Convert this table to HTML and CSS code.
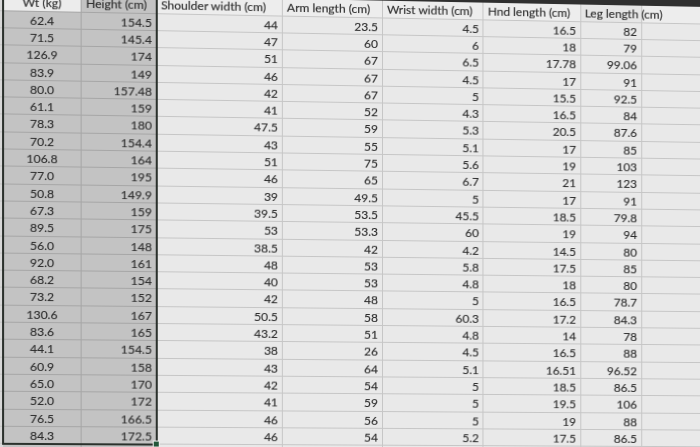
FILE: index.html
```html
<!DOCTYPE html>
<html lang="en">
<head>
<meta charset="utf-8">
<title>Body measurements</title>
<link rel="stylesheet" href="styles.css">
</head>
<body>
<div class="photo">
<div class="sheet">
  <div class="topbar"></div>
  <div class="row hd"><div class="c"></div><div class="c">Wt (kg)</div><div class="c">Height (cm)</div><div class="c">Shoulder width (cm)</div><div class="c">Arm length (cm)</div><div class="c">Wrist width (cm)</div><div class="c">Hnd length (cm)</div><div class="c">Leg length (cm)</div><div class="c"></div></div>
  <div class="row"><div class="c"></div><div class="c">62.4</div><div class="c">154.5</div><div class="c">44</div><div class="c">23.5</div><div class="c">4.5</div><div class="c">16.5</div><div class="c">82</div><div class="c"></div></div>
  <div class="row"><div class="c"></div><div class="c">71.5</div><div class="c">145.4</div><div class="c">47</div><div class="c">60</div><div class="c">6</div><div class="c">18</div><div class="c">79</div><div class="c"></div></div>
  <div class="row"><div class="c"></div><div class="c">126.9</div><div class="c">174</div><div class="c">51</div><div class="c">67</div><div class="c">6.5</div><div class="c">17.78</div><div class="c">99.06</div><div class="c"></div></div>
  <div class="row"><div class="c"></div><div class="c">83.9</div><div class="c">149</div><div class="c">46</div><div class="c">67</div><div class="c">4.5</div><div class="c">17</div><div class="c">91</div><div class="c"></div></div>
  <div class="row"><div class="c"></div><div class="c">80.0</div><div class="c">157.48</div><div class="c">42</div><div class="c">67</div><div class="c">5</div><div class="c">15.5</div><div class="c">92.5</div><div class="c"></div></div>
  <div class="row"><div class="c"></div><div class="c">61.1</div><div class="c">159</div><div class="c">41</div><div class="c">52</div><div class="c">4.3</div><div class="c">16.5</div><div class="c">84</div><div class="c"></div></div>
  <div class="row"><div class="c"></div><div class="c">78.3</div><div class="c">180</div><div class="c">47.5</div><div class="c">59</div><div class="c">5.3</div><div class="c">20.5</div><div class="c">87.6</div><div class="c"></div></div>
  <div class="row"><div class="c"></div><div class="c">70.2</div><div class="c">154.4</div><div class="c">43</div><div class="c">55</div><div class="c">5.1</div><div class="c">17</div><div class="c">85</div><div class="c"></div></div>
  <div class="row"><div class="c"></div><div class="c">106.8</div><div class="c">164</div><div class="c">51</div><div class="c">75</div><div class="c">5.6</div><div class="c">19</div><div class="c">103</div><div class="c"></div></div>
  <div class="row"><div class="c"></div><div class="c">77.0</div><div class="c">195</div><div class="c">46</div><div class="c">65</div><div class="c">6.7</div><div class="c">21</div><div class="c">123</div><div class="c"></div></div>
  <div class="row"><div class="c"></div><div class="c">50.8</div><div class="c">149.9</div><div class="c">39</div><div class="c">49.5</div><div class="c">5</div><div class="c">17</div><div class="c">91</div><div class="c"></div></div>
  <div class="row"><div class="c"></div><div class="c">67.3</div><div class="c">159</div><div class="c">39.5</div><div class="c">53.5</div><div class="c">45.5</div><div class="c">18.5</div><div class="c">79.8</div><div class="c"></div></div>
  <div class="row"><div class="c"></div><div class="c">89.5</div><div class="c">175</div><div class="c">53</div><div class="c">53.3</div><div class="c">60</div><div class="c">19</div><div class="c">94</div><div class="c"></div></div>
  <div class="row"><div class="c"></div><div class="c">56.0</div><div class="c">148</div><div class="c">38.5</div><div class="c">42</div><div class="c">4.2</div><div class="c">14.5</div><div class="c">80</div><div class="c"></div></div>
  <div class="row"><div class="c"></div><div class="c">92.0</div><div class="c">161</div><div class="c">48</div><div class="c">53</div><div class="c">5.8</div><div class="c">17.5</div><div class="c">85</div><div class="c"></div></div>
  <div class="row"><div class="c"></div><div class="c">68.2</div><div class="c">154</div><div class="c">40</div><div class="c">53</div><div class="c">4.8</div><div class="c">18</div><div class="c">80</div><div class="c"></div></div>
  <div class="row"><div class="c"></div><div class="c">73.2</div><div class="c">152</div><div class="c">42</div><div class="c">48</div><div class="c">5</div><div class="c">16.5</div><div class="c">78.7</div><div class="c"></div></div>
  <div class="row"><div class="c"></div><div class="c">130.6</div><div class="c">167</div><div class="c">50.5</div><div class="c">58</div><div class="c">60.3</div><div class="c">17.2</div><div class="c">84.3</div><div class="c"></div></div>
  <div class="row"><div class="c"></div><div class="c">83.6</div><div class="c">165</div><div class="c">43.2</div><div class="c">51</div><div class="c">4.8</div><div class="c">14</div><div class="c">78</div><div class="c"></div></div>
  <div class="row"><div class="c"></div><div class="c">44.1</div><div class="c">154.5</div><div class="c">38</div><div class="c">26</div><div class="c">4.5</div><div class="c">16.5</div><div class="c">88</div><div class="c"></div></div>
  <div class="row"><div class="c"></div><div class="c">60.9</div><div class="c">158</div><div class="c">43</div><div class="c">64</div><div class="c">5.1</div><div class="c">16.51</div><div class="c">96.52</div><div class="c"></div></div>
  <div class="row"><div class="c"></div><div class="c">65.0</div><div class="c">170</div><div class="c">42</div><div class="c">54</div><div class="c">5</div><div class="c">18.5</div><div class="c">86.5</div><div class="c"></div></div>
  <div class="row"><div class="c"></div><div class="c">52.0</div><div class="c">172</div><div class="c">41</div><div class="c">59</div><div class="c">5</div><div class="c">19.5</div><div class="c">106</div><div class="c"></div></div>
  <div class="row"><div class="c"></div><div class="c">76.5</div><div class="c">166.5</div><div class="c">46</div><div class="c">56</div><div class="c">5</div><div class="c">19</div><div class="c">88</div><div class="c"></div></div>
  <div class="row"><div class="c"></div><div class="c">84.3</div><div class="c">172.5</div><div class="c">46</div><div class="c">54</div><div class="c">5.2</div><div class="c">17.5</div><div class="c">86.5</div><div class="c"></div></div>
  <div class="row blank"><div class="c"></div><div class="c"></div><div class="c"></div><div class="c"></div><div class="c"></div><div class="c"></div><div class="c"></div><div class="c"></div><div class="c"></div></div>
  <div class="sel"><span class="handle"></span></div>
</div>
</div>
</body>
</html>
```

FILE: styles.css
```css
html, body {
  margin: 0;
  padding: 0;
}

body {
  width: 700px;
  height: 447px;
  overflow: hidden;
  background: #e6e6e6;
  font-family: Lato, "Open Sans", sans-serif;
}

.photo {
  display: flow-root;
  transform-origin: 0 0;
  transform: matrix3d(1.02325, 0.019727, 0, 0.00003322, 0, 1.00133, 0, 0, 0, 0, 1, 0, 0, -0.789, 0, 1);
}

.sheet {
  position: relative;
  display: grid;
  grid-template-columns: 2.9px 77.4px 73.9px 124.9px 99.9px 101.5px 98.2px 62.1px 120px;
  grid-template-rows: 20px repeat(27, 17.3px);
  margin-top: -25.6px;
  font-size: 12px;
  color: #2e2e2e;
  -webkit-text-stroke: 0.15px #2e2e2e;
}

.topbar {
  grid-column: 1 / -1;
  background: #2f2f2f;
}

.row {
  display: contents;
}

.c {
  box-sizing: border-box;
  border-right: 1px solid #c6c6c6;
  border-bottom: 1px solid #c6c6c6;
  background: #e9e9e9;
  padding: 0 4px;
  line-height: 17px;
  white-space: nowrap;
  text-align: right;
}

.row > .c:nth-child(1) {
  background: #d8d8d8;
  border-right: none;
  padding: 0;
}

.row > .c:nth-child(2) {
  text-align: center;
  background: #c3c3c3;
  border-color: #a6a6a6;
}

.row > .c:nth-child(3) {
  background: #c3c3c3;
  border-color: #a6a6a6;
}

.hd > .c {
  text-align: left;
  background: #ededed;
}

.hd > .c:nth-child(2) {
  text-align: center;
  background: #ececec;
}

.hd > .c:nth-child(3) {
  background: #c3c3c3;
}

.hd > .c:nth-child(8) {
  position: relative;
  z-index: 1;
  background: transparent;
}

.sel {
  position: absolute;
  grid-column: 2 / 4;
  grid-row: 2 / 28;
  inset: -1px;
  border: 2px solid #2b312c;
  z-index: 2;
  pointer-events: none;
}

.handle {
  position: absolute;
  right: -4px;
  bottom: -4px;
  width: 5px;
  height: 5px;
  background: #22573a;
  border: 1px solid #f0f0f0;
}
```
